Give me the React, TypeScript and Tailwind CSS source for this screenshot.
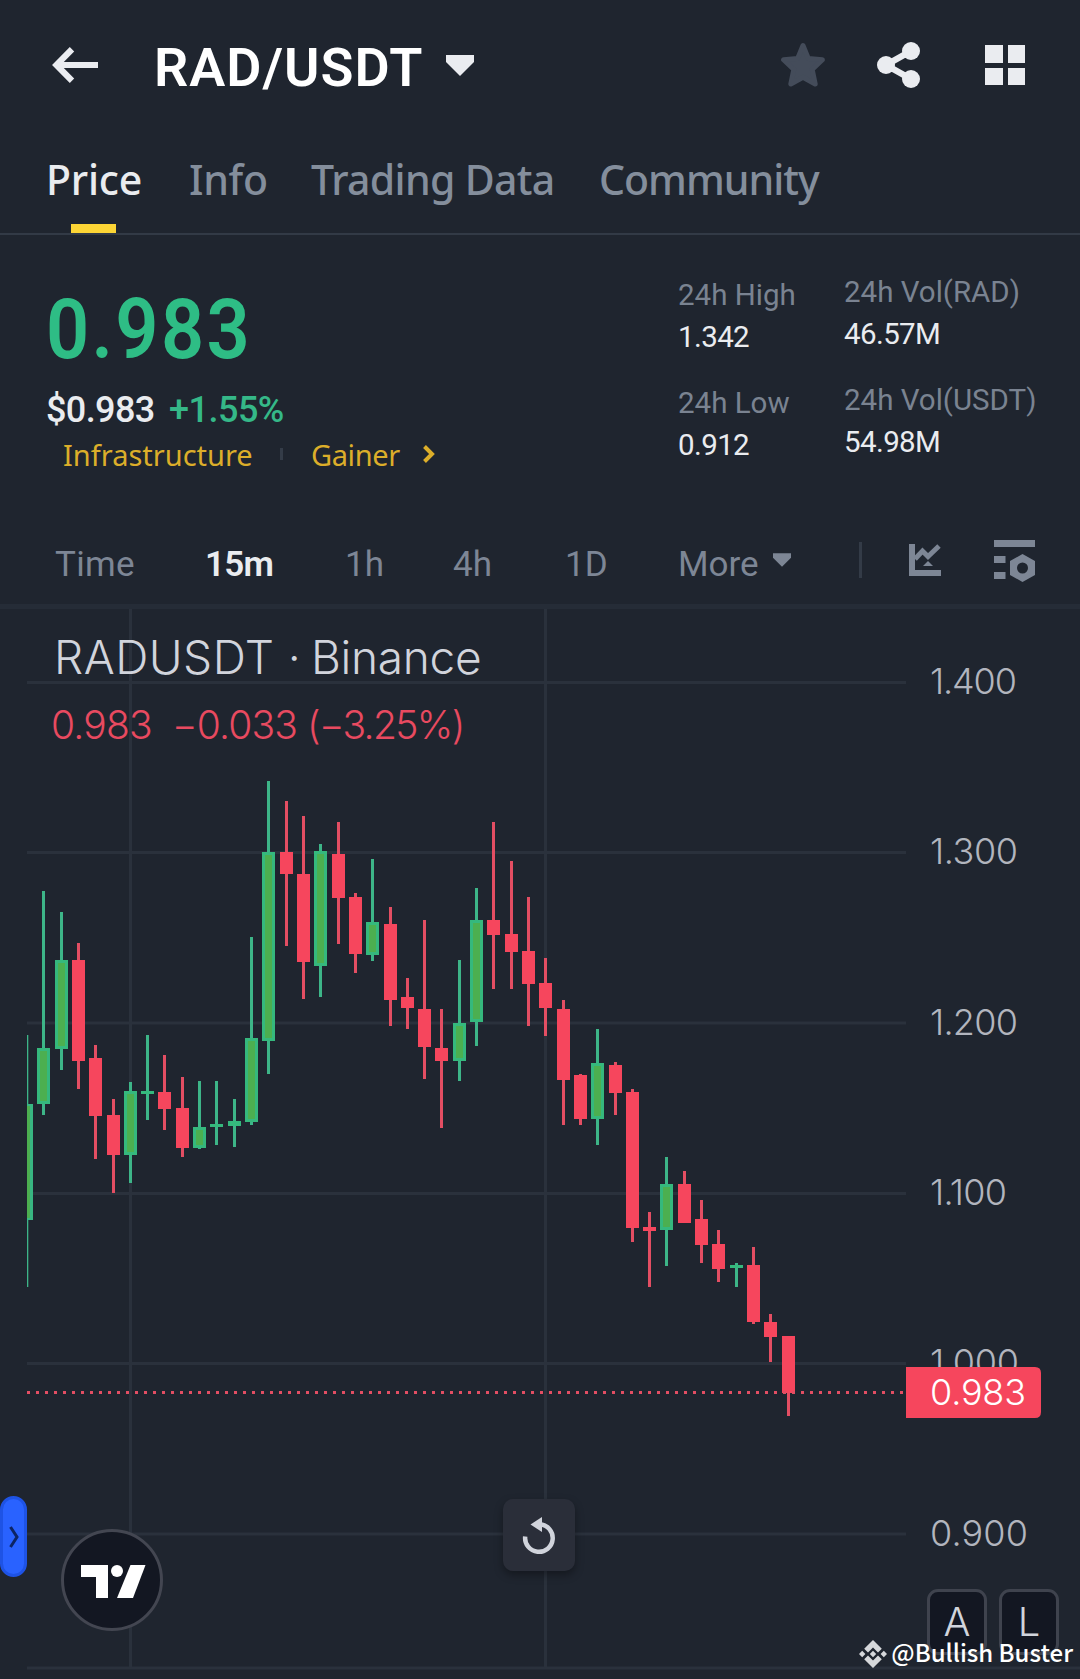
import { Fragment } from 'react';
import clsx from 'clsx';

const tabs = [
  { label: 'Price', box: 'w-[143px]', text: 'tracking-[-0.2px]', active: true },
  { label: 'Info', box: 'w-[122px]', text: 'tracking-[-0.3px]' },
  { label: 'Trading Data', box: 'w-[288px]', text: 'tracking-[-0.7px]' },
  { label: 'Community', box: 'w-[240px]', text: 'tracking-[-1px]' },
];

const stats = [
  [
    { label: '24h High', value: '1.342' },
    { label: '24h Low', value: '0.912' },
  ],
  [
    { label: '24h Vol(RAD)', value: '46.57M' },
    { label: '24h Vol(USDT)', value: '54.98M' },
  ],
];

const intervals = [
  { label: 'Time', box: 'w-[150px] tracking-[0.3px]' },
  { label: '15m', box: 'w-[140px] tracking-[-0.7px]', active: true },
  { label: '1h', box: 'w-[108px]' },
  { label: '4h', box: 'w-[112px]' },
  { label: '1D', box: 'w-[113px]' },
];

const levels = [
  { label: '1.400', y: 682.5, w: 87 },
  { label: '1.300', y: 852.5, w: 88 },
  { label: '1.200', y: 1023, w: 88 },
  { label: '1.100', y: 1193.5, w: 77 },
  { label: '1.000', y: 1363.5, w: 89 },
  { label: '0.900', y: 1534, w: 98 },
];

type Candle = [x: number, side: 'g' | 'r', high: number, top: number, bottom: number, low: number];

const candles: Candle[] = [
  [43.5, 'g', 891, 1048, 1104, 1115],
  [61.5, 'g', 912, 960, 1049, 1070],
  [78.5, 'r', 943, 960, 1061, 1089],
  [95.5, 'r', 1045, 1058, 1116, 1159],
  [113.5, 'r', 1099, 1115, 1155, 1193],
  [130.5, 'g', 1082, 1091, 1155, 1183],
  [147.5, 'g', 1035, 1091, 1094, 1120],
  [164.5, 'r', 1055, 1092, 1109, 1130],
  [182.5, 'r', 1077, 1108, 1148, 1157],
  [199.5, 'g', 1081, 1127, 1148, 1149],
  [216.5, 'g', 1081, 1124, 1127, 1145],
  [234.5, 'g', 1099, 1121, 1126, 1147],
  [251.5, 'g', 937, 1038, 1122, 1125],
  [268.5, 'g', 781, 852, 1041, 1074],
  [286.5, 'r', 801, 852, 874, 946],
  [303.5, 'r', 816, 874, 962, 999],
  [320.5, 'g', 844, 851, 966, 997],
  [338.5, 'r', 822, 854, 898, 944],
  [355.5, 'r', 893, 897, 954, 973],
  [372.5, 'g', 859, 922, 955, 961],
  [390.5, 'r', 907, 924, 1000, 1026],
  [407.5, 'r', 978, 997, 1008, 1029],
  [424.5, 'r', 920, 1009, 1047, 1079],
  [441.5, 'r', 1009, 1048, 1061, 1128],
  [459.5, 'g', 960, 1023, 1061, 1081],
  [476.5, 'g', 888, 920, 1022, 1046],
  [493.5, 'r', 822, 920, 935, 989],
  [511.5, 'r', 861, 934, 952, 989],
  [528.5, 'r', 897, 951, 984, 1026],
  [545.5, 'r', 958, 983, 1008, 1036],
  [563.5, 'r', 1000, 1009, 1080, 1125],
  [580.5, 'r', 1074, 1075, 1119, 1125],
  [597.5, 'g', 1029, 1063, 1119, 1145],
  [615.5, 'r', 1062, 1065, 1093, 1115],
  [632.5, 'r', 1089, 1092, 1228, 1242],
  [649.5, 'r', 1212, 1227, 1231, 1287],
  [666.5, 'g', 1157, 1184, 1230, 1266],
  [684.5, 'r', 1171, 1184, 1223, 1223],
  [701.5, 'r', 1200, 1219, 1245, 1263],
  [718.5, 'r', 1230, 1244, 1269, 1282],
  [736.5, 'g', 1263, 1265, 1268, 1287],
  [753.5, 'r', 1247, 1265, 1322, 1324],
  [770.5, 'r', 1314, 1322, 1337, 1362],
  [788.5, 'r', 1336, 1336, 1393, 1416],
];

function Caret({ className }: { className: string }) {
  return (
    <svg viewBox="0 0 28 21" className={className} fill="currentColor">
      <path d="M0 0H28V7L14 21L0 7Z" />
    </svg>
  );
}

function Header() {
  return (
    <header className="flex h-[130px] items-center pl-[52px] pr-[55px] text-[#eaecf0]">
      <svg viewBox="0 0 46 36" className="h-9 w-[46px]" fill="none" stroke="currentColor" strokeWidth="6.2">
        <path d="M46 18H5M20 2.2L4.4 18L20 33.8" />
      </svg>
      <h1 className="ml-[56px] w-[292px] whitespace-nowrap pt-[5px] font-[Roboto] text-[54px] leading-none font-semibold tracking-[1px] text-white">
        RAD/USDT
      </h1>
      <Caret className="h-[21px] w-7" />
      <svg viewBox="0 0 44 46" className="ml-auto h-[46px] w-11 text-[#444c5a]" fill="currentColor" stroke="currentColor" strokeWidth="5" strokeLinejoin="round">
        <path d="M22 3.5L27.4 16.6L41.4 17.8L31.2 27.4L34.2 42L22 35.2L9.8 42L12.8 27.4L2.6 17.8L16.6 16.6Z" />
      </svg>
      <svg viewBox="0 0 43 46" className="ml-[52px] h-[46px] w-[43px]" fill="currentColor">
        <path d="M9 23L34 9M9 23L34 37" stroke="currentColor" strokeWidth="6.5" />
        <circle cx="9" cy="23" r="9" />
        <circle cx="34" cy="9" r="9" />
        <circle cx="34" cy="37" r="9" />
      </svg>
      <div className="ml-[65px] grid grid-cols-2 gap-[5px]">
        {[0, 1, 2, 3].map((i) => (
          <div key={i} className="size-[17.5px] bg-[#eaecf0]" />
        ))}
      </div>
    </header>
  );
}

function Tabs() {
  return (
    <nav className="flex h-[105px] border-b-2 border-[#323a46] pl-[46px] font-['Noto_Sans'] text-[41px] leading-none font-medium text-[#848e9c]">
      {tabs.map((tab) => (
        <div key={tab.label} className={clsx('flex shrink-0 flex-col', tab.box)}>
          <div className={clsx('flex h-[94px] items-center whitespace-nowrap pt-[4px]', tab.text, tab.active && 'text-[#eaecef]')}>
            {tab.label}
          </div>
          {tab.active && <div className="ml-[25px] h-[9px] w-[45px] bg-[#fcd535]" />}
        </div>
      ))}
    </nav>
  );
}

function Overview() {
  return (
    <section className="flex h-[265px] whitespace-nowrap leading-none">
      <div className="w-[678px] pl-[46px] pt-[53px]">
        <div className="h-[84px] w-max origin-left scale-x-[0.9] font-[Roboto] text-[84px] leading-none font-semibold tracking-[2.6px] text-[#2ebd85]">
          0.983
        </div>
        <div className="mt-5 flex h-9 font-[Roboto] text-[36px] leading-none font-medium">
          <span className="w-[123px] tracking-[-0.6px] text-[#eaecef]">$0.983</span>
          <span className="tracking-[-0.5px] text-[#35b888]">+1.55%</span>
        </div>
        <div className="mt-[11px] flex h-[30px] items-center pl-[17px] font-['Noto_Sans'] text-[29px] leading-none text-[#dcae2a]">
          <span className="w-[217px]">Infrastructure</span>
          <span className="mr-7 h-3 w-[3px] bg-[#343c48]" />
          <span className="w-[112px] tracking-[-0.4px]">Gainer</span>
          <svg viewBox="0 0 12 18" className="h-[18px] w-3" fill="none" stroke="currentColor" strokeWidth="4">
            <path d="M1.5 1.5L9 9L1.5 16.5" />
          </svg>
        </div>
      </div>
      {stats.map((column, i) => (
        <div key={i} className={clsx('flex flex-col', i === 0 ? 'w-[166px] pt-[40px]' : 'pt-[37px]')}>
          {column.map((item) => (
            <div key={item.label} className="mb-6 font-[Roboto] text-[29.5px]">
              <div className="flex h-[42px] items-center text-[#7a8391]">{item.label}</div>
              <div className="flex h-[42px] items-center tracking-[-0.6px] text-[#eaecef]">{item.value}</div>
            </div>
          ))}
        </div>
      ))}
    </section>
  );
}

function IntervalBar() {
  return (
    <div className="flex h-[109px] items-center border-b-[5px] border-[#252c37] pl-[55px] font-[Roboto] text-[35px] leading-none text-[#7d8695]">
      {intervals.map((item) => (
        <span key={item.label} className={clsx('shrink-0 pt-[24px]', item.box, item.active && 'font-semibold text-[#eaecef]')}>
          {item.label}
        </span>
      ))}
      <span className="w-[95px] shrink-0 pt-[24px]">More</span>
      <Caret className="mt-4 h-[14px] w-[18px]" />
      <span className="ml-[68px] mt-4 h-9 w-[3px] bg-[#333b47]" />
      <svg viewBox="0 0 32 32" className="ml-[47px] mt-4 size-8" fill="none" stroke="currentColor" strokeWidth="5">
        <path d="M3 0V29H32" strokeWidth="6" />
        <path d="M6 15L13.5 7L19 12.5L30 2" />
        <path d="M14 22L19 17L24 22Z" fill="currentColor" stroke="none" />
      </svg>
      <svg viewBox="0 0 41 42" className="ml-[53px] mt-[18px] h-[42px] w-[41px]" fill="currentColor">
        <path d="M0 0H41V7H0ZM0 16H11.5V23H0ZM0 32H11.5V39H0Z" />
        <path fillRule="evenodd" d="M28.5 14L41 21V35L28.5 42L16 35V21ZM28.5 22.5A5.5 5.5 0 1 0 28.5 33.5A5.5 5.5 0 1 0 28.5 22.5Z" />
      </svg>
    </div>
  );
}

function Chart() {
  return (
    <svg viewBox="0 609 1080 1070" className="block h-[1070px] w-[1080px]">
      <g stroke="#2a313c" strokeWidth="3">
        {levels.map((level) => (
          <line key={level.label} x1="27" x2="906" y1={level.y} y2={level.y} />
        ))}
        <line x1="27" x2="1080" y1="1668" y2="1668" />
        <line x1="130.5" x2="130.5" y1="605" y2="1668" />
        <line x1="545.5" x2="545.5" y1="605" y2="1668" />
      </g>
      <g className="font-[Inter]" fontSize="36" fontWeight="300" fill="#b2b5be">
        {levels.map((level) => (
          <text key={level.label} x="930" y={level.y + 11.5} textLength={level.w}>
            {level.label}
          </text>
        ))}
      </g>
      <rect x="27" y="1035" width="1.3" height="252" fill="#3db588" />
      <rect x="27" y="1104" width="6" height="116" fill="#38b682" />
      <rect x="27" y="1106" width="3" height="112" fill="#4caf50" />
      {candles.map(([x, side, high, top, bottom, low]) => (
        <Fragment key={x}>
          <rect x={x - 1.5} y={high} width="3" height={low - high} fill={side === 'g' ? '#3db588' : '#e34e63'} />
          <rect x={x - 6.5} y={top} width="13" height={bottom - top} fill={side === 'g' ? '#35b87d' : '#f6465d'} />
          {side === 'g' && bottom - top > 8 && (
            <rect x={x - 3.5} y={top + 3} width="7" height={bottom - top - 6} fill="#4caf50" />
          )}
        </Fragment>
      ))}
      <line x1="27" x2="906" y1="1392.5" y2="1392.5" stroke="#e34e63" strokeWidth="3" strokeDasharray="3 6" />
      <path d="M906 1367H1035Q1041 1367 1041 1373V1412Q1041 1418 1035 1418H906Z" fill="#f6465d" />
      <text x="930" y="1405" textLength="96" className="font-[Inter]" fontSize="36" fontWeight="300" fill="#ffffff">
        0.983
      </text>
    </svg>
  );
}

function ChartOverlays() {
  return (
    <>
      <div className="absolute top-[25px] left-[54px] whitespace-nowrap font-[Inter] leading-none font-light">
        <div className="flex text-[46px] text-[#d1d4dc]">
          <span className="w-[257px] tracking-[0.5px]">RADUSDT&nbsp;·</span>
          <span className="tracking-[-0.3px]">Binance</span>
        </div>
        <div className="mt-[25px] -ml-[3px] flex text-[39px] tracking-[-0.8px] text-[#e84a60]">
          <span className="w-[121px]">0.983</span>
          <span className="w-[135px]">−0.033</span>
          <span className="tracking-[-1.6px]">(−3.25%)</span>
        </div>
      </div>

      <div className="absolute top-[887px] left-0 flex h-[81px] w-[27px] items-center justify-center rounded-full border-[3px] border-[#1e53e5] bg-[#2962ff]">
        <svg viewBox="0 0 10 22" className="h-[22px] w-[10px]" fill="none" stroke="#0c2464" strokeWidth="3">
          <path d="M1.5 1L8 11L1.5 21" />
        </svg>
      </div>

      <div className="absolute top-[920px] left-[61px] size-[102px] rounded-full border-[3.5px] border-[#434651] bg-[#131722]">
        <svg viewBox="61 1529 103 103" className="-m-[3px] size-[103px] max-w-none" fill="#ffffff">
          <path d="M81 1565H108V1598H96V1577H81Z" />
          <circle cx="117" cy="1571" r="6" />
          <path d="M130.5 1565H145.5L133 1598H117Z" />
        </svg>
      </div>

      <div className="absolute top-[890px] left-[503px] flex size-[72px] items-center justify-center rounded-[10px] bg-[#2a2e39] shadow-[0_4px_8px_rgba(0,0,0,0.35)]">
        <svg viewBox="0 0 36 40" className="h-10 w-9" fill="none">
          <path d="M4.2 21.5A13.8 13.8 0 1 0 19 9.3" stroke="#d1d4dc" strokeWidth="4.5" />
          <path d="M9.5 9.5L21 2V17Z" fill="#d1d4dc" />
        </svg>
      </div>

      <div className="absolute top-[980px] left-[927px] flex gap-3 font-[Inter] text-[40px] leading-none font-light text-[#d1d4dc]">
        <div className="flex h-[66px] w-[60px] items-center justify-center rounded-[11px] border-[3px] border-[#3f434e] bg-[#131722]">A</div>
        <div className="flex h-[66px] w-[60px] items-center justify-center rounded-[11px] border-[3px] border-[#3f434e] bg-[#131722]">L</div>
      </div>

      <div className="absolute right-[7px] bottom-[11px] flex items-center gap-1 whitespace-nowrap font-['Noto_Sans_CJK_SC'] text-[24px] leading-none font-medium text-white">
        <svg viewBox="0 0 28 28" className="mt-1 size-7" fill="#d6d8db">
          <path d="M14 0L22.8 8.8L19 12.6L14 7.6L9 12.6L5.2 8.8Z" />
          <path d="M14 28L22.8 19.2L19 15.4L14 20.4L9 15.4L5.2 19.2Z" />
          <path d="M3.2 10.8L6.4 14L3.2 17.2L0 14ZM24.8 10.8L28 14L24.8 17.2L21.6 14ZM14 10.8L17.2 14L14 17.2L10.8 14Z" />
        </svg>
        @Bullish Buster
      </div>
    </>
  );
}

export default function App() {
  return (
    <div className="h-[1679px] w-[1080px] overflow-hidden bg-[#1f252f]">
      <Header />
      <Tabs />
      <Overview />
      <IntervalBar />
      <div className="relative">
        <Chart />
        <ChartOverlays />
      </div>
    </div>
  );
}
